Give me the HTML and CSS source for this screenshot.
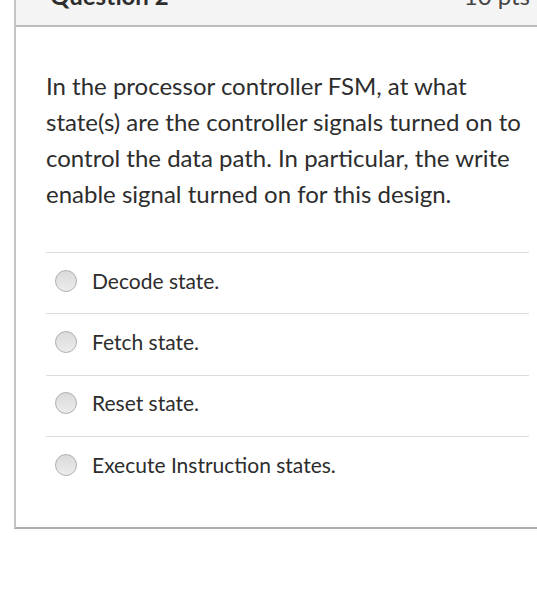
FILE: index.html
```html
<!DOCTYPE html>
<html>
<head>
<meta charset="utf-8">
<link rel="stylesheet" href="styles.css">
</head>
<body>
<div class="card">
  <div class="header">
    <span class="title">Question 2</span>
    <span class="pts">10 pts</span>
  </div>
  <div class="content">
    <p class="question">In the processor controller FSM, at what state(s) are the controller signals turned on to control the data path. In particular, the write enable signal turned on for this design.</p>
    <div class="answers">
      <div class="answer"><span class="radio"></span><span class="label">Decode state.</span></div>
      <div class="answer"><span class="radio"></span><span class="label">Fetch state.</span></div>
      <div class="answer"><span class="radio"></span><span class="label">Reset state.</span></div>
      <div class="answer"><span class="radio"></span><span class="label">Execute Instruction states.</span></div>
    </div>
  </div>
</div>
</body>
</html>
```
FILE: styles.css
```css
html, body {
  margin: 0;
  padding: 0;
  background: #fff;
  overflow: hidden;
}
body {
  width: 537px;
  height: 596px;
  font-family: Lato, "Liberation Sans", sans-serif;
  color: #2d2d2d;
}
.card {
  margin-left: 14px;
  margin-top: -31px;
  width: 560px;
  border-left: 2px solid #c4c4c4;
  border-bottom: 2px solid #adadad;
}
.header {
  height: 58px;
  background: #f4f4f4;
  border-bottom: 2px solid #bdbdbd;
  display: flex;
  align-items: flex-end;
  justify-content: space-between;
  padding: 0 46px 0 34px;
  box-sizing: border-box;
  overflow: hidden;
}
.title {
  font-weight: bold;
  font-size: 24px;
  line-height: 1;
  margin-bottom: 17px;
}
.pts {
  font-size: 24px;
  line-height: 1;
  margin-bottom: 17px;
  color: #444;
}
.content {
  padding: 41px 30px 30px 30px;
}
.question {
  margin: 0;
  width: 482px;
  font-size: 24px;
  line-height: 36px;
}
.answers {
  margin-top: 40px;
  width: 483px;
}
.answer {
  display: flex;
  align-items: center;
  height: 60.3px;
  box-sizing: content-box;
  border-top: 1px solid #dcdcdc;
}
.radio {
  width: 20px;
  height: 20px;
  border-radius: 50%;
  border: 1px solid #b0b0b0;
  background: linear-gradient(#dadada, #ececec);
  margin-left: 9px;
  margin-right: 15px;
  margin-bottom: 5px;
  flex: none;
}
.label {
  font-size: 21px;
  margin-bottom: 6px;
}
```
